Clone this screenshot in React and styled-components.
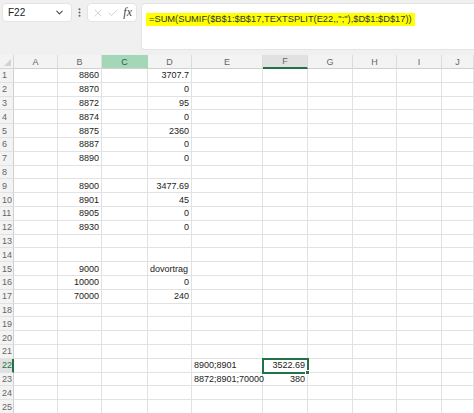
import React from "react";
import styled, { createGlobalStyle } from "styled-components";
import { ChevronDown, X, Check, EllipsisVertical } from "lucide-react";

const GlobalStyle = createGlobalStyle`
  * { box-sizing: border-box; }
  body {
    margin: 0;
    background: #ffffff;
    font-family: "Liberation Sans", Arial, sans-serif;
    overflow: hidden;
  }
`;

const COLS = ["A", "B", "C", "D", "E", "F", "G", "H", "I", "J"];

// row -> { col: [value, align] }
const DATA = {
  1: { B: "8860", D: "3707.7" },
  2: { B: "8870", D: "0" },
  3: { B: "8872", D: "95" },
  4: { B: "8874", D: "0" },
  5: { B: "8875", D: "2360" },
  6: { B: "8887", D: "0" },
  7: { B: "8890", D: "0" },
  9: { B: "8900", D: "3477.69" },
  10: { B: "8901", D: "45" },
  11: { B: "8905", D: "0" },
  12: { B: "8930", D: "0" },
  15: { B: "9000", D: "dovortrag" },
  16: { B: "10000", D: "0" },
  17: { B: "70000", D: "240" },
  22: { E: "8900;8901", F: "3522.69" },
  23: { E: "8872;8901;70000", F: "380" },
};

const isNumber = (v) => /^[0-9.]+$/.test(v);

const App = () => {
  const rows = Array.from({ length: 25 }, (_, i) => i + 1);
  return (
    <Page>
      <GlobalStyle />
      <TopBar>
        <NameBox>
          <span>F22</span>
          <ChevronDown size={11} strokeWidth={2.2} color="#444" />
        </NameBox>
        <Dots>
          <EllipsisVertical size={11} strokeWidth={2.4} color="#666" />
        </Dots>
        <FxBox>
          <X size={14} strokeWidth={1.2} color="#b8b8b8" />
          <Check size={14} strokeWidth={1.2} color="#b8b8b8" />
          <Fx>fx</Fx>
        </FxBox>
        <FormulaBox>
          <Highlight>
            =SUM(SUMIF($B$1:$B$17,TEXTSPLIT(E22,,";"),$D$1:$D$17))
          </Highlight>
        </FormulaBox>
      </TopBar>

      <Sheet>
        <Corner>
          <CornerMark />
        </Corner>
        {COLS.map((c) => (
          <ColHead key={c} $state={c === "C" ? "green" : c === "F" ? "active" : ""}>
            {c}
          </ColHead>
        ))}
        {rows.map((r) => (
          <React.Fragment key={r}>
            <RowHead $active={r === 22}>{r}</RowHead>
            {COLS.map((c) => {
              const v = DATA[r] && DATA[r][c];
              const selected = r === 22 && c === "F";
              return (
                <Cell key={c} $right={v && isNumber(v)} $selected={selected}>
                  {v}
                  {selected && <Handle />}
                </Cell>
              );
            })}
          </React.Fragment>
        ))}
      </Sheet>
    </Page>
  );
};

export default App;

const Page = styled.div`
  width: 474px;
  height: 413px;
  overflow: hidden;
  background: #f0f0f0;
`;

const TopBar = styled.div`
  display: flex;
  align-items: flex-start;
  height: 55px;
  padding: 3px 0 0 2px;
  background: #f0f0f0;
`;

const NameBox = styled.div`
  display: flex;
  align-items: center;
  justify-content: space-between;
  width: 70px;
  height: 19px;
  padding: 0 6px 0 5px;
  background: #fff;
  border: 1px solid #e4e4e4;
  border-radius: 4px;
  font-size: 10px;
  color: #222;
`;

const Dots = styled.div`
  display: flex;
  align-items: center;
  justify-content: center;
  width: 15px;
  height: 19px;
`;

const FxBox = styled.div`
  display: flex;
  align-items: center;
  gap: 3px;
  width: 50px;
  height: 19px;
  padding: 0 4px;
  background: #fff;
  border: 1px solid #e4e4e4;
  border-radius: 4px;
`;

const Fx = styled.span`
  font-family: "Liberation Serif", "Times New Roman", serif;
  font-style: italic;
  font-size: 12px;
  color: #444;
  margin-left: 1px;
`;

const FormulaBox = styled.div`
  flex: 1;
  height: 47px;
  margin-left: 4px;
  padding: 4px 0 0 4px;
  background: #fff;
  border: 1px solid #e4e4e4;
  border-right: none;
  border-radius: 4px 0 0 4px;
`;

const Highlight = styled.span`
  display: inline-block;
  background: #ffff00;
  padding: 1px 3px 1px 3px;
  font-size: 9.3px;
  line-height: 11px;
  color: #333;
  white-space: nowrap;
`;

const Sheet = styled.div`
  display: grid;
  grid-template-columns: 14px 44px 44px 46px 44px 71px 45px 45px 44px 45px 1fr;
  grid-template-rows: 14px;
  grid-auto-rows: 13.8px;
  background: #fff;
  font-size: 9px;
  color: #222;
`;

const Corner = styled.div`
  position: relative;
  background: #f3f3f3;
  border-right: 1px solid #d6d6d6;
  border-bottom: 1px solid #d6d6d6;
`;

const CornerMark = styled.div`
  position: absolute;
  right: 2px;
  bottom: 2px;
  width: 0;
  height: 0;
  border-left: 7px solid transparent;
  border-bottom: 7px solid #d2d2d2;
`;

const ColHead = styled.div`
  display: flex;
  align-items: center;
  justify-content: center;
  background: ${(p) =>
    p.$state === "green" ? "#a3d7b8" : p.$state === "active" ? "#e1e1e1" : "#f3f3f3"};
  border-right: 1px solid ${(p) => (p.$state === "green" ? "#a3d7b8" : "#dcdcdc")};
  border-bottom: ${(p) => (p.$state === "active" ? "2px solid #217346" : "1px solid #d0d0d0")};
  color: ${(p) => (p.$state === "green" ? "#2d5a40" : "#666")};
  font-size: 9px;
`;

const RowHead = styled.div`
  display: flex;
  align-items: center;
  padding-left: 2px;
  background: ${(p) => (p.$active ? "#e1e1e1" : "#f3f3f3")};
  border-right: ${(p) => (p.$active ? "2px solid #217346" : "1px solid #d0d0d0")};
  border-bottom: 1px solid #e2e2e2;
  color: ${(p) => (p.$active ? "#217346" : "#666")};
  font-size: 9px;
`;

const Cell = styled.div`
  position: relative;
  display: flex;
  align-items: center;
  justify-content: ${(p) => (p.$right ? "flex-end" : "flex-start")};
  padding: 0 2px;
  border-right: 1px solid #e2e2e2;
  border-bottom: 1px solid #e2e2e2;
  white-space: nowrap;
  overflow: visible;
  ${(p) =>
    p.$selected &&
    `
    outline: 2px solid #217346;
    outline-offset: -1px;
    z-index: 2;
  `}
`;

const Handle = styled.div`
  position: absolute;
  right: -3px;
  bottom: -3px;
  width: 5px;
  height: 5px;
  background: #217346;
  border: 1px solid #fff;
`;
